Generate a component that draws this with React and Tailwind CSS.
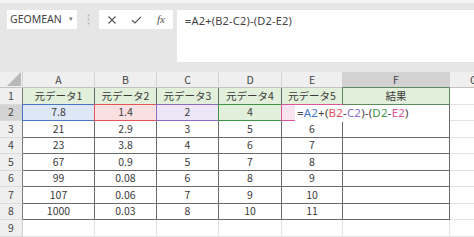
import React from "react";

const CELL_FONT = { fontFamily: '"Noto Sans CJK JP", "Noto Sans", sans-serif' };
const UI_FONT = { fontFamily: '"Noto Sans", "Open Sans", sans-serif' };

const rowsData = [
  ["21", "2.9", "3", "5", "6"],
  ["23", "3.8", "4", "6", "7"],
  ["67", "0.9", "5", "7", "8"],
  ["99", "0.08", "6", "8", "9"],
  ["107", "0.06", "7", "9", "10"],
  ["1000", "0.03", "8", "10", "11"],
];

const headers = ["元データ1", "元データ2", "元データ3", "元データ4", "元データ5", "結果"];

function HeaderCell({ children, dark }) {
  return (
    <div
      className={
        "flex items-center justify-center border-r border-b border-r-[#d4d4d4] border-b-[#c4c4c4] text-[10.5px] text-[#444] " +
        (dark ? "bg-[#d2d2d2]" : "bg-[#efefef]")
      }
    >
      {children}
    </div>
  );
}

function RowHead({ n, dark, inTable }) {
  return (
    <div
      className={
        "flex items-center justify-center border-r border-b border-b-[#dadada] text-[10.5px] text-[#444] " +
        (inTable ? "border-r-[#7a7a7a] " : "border-r-[#cfcfcf] ") +
        (dark ? "bg-[#d4d4d4]" : "bg-[#efefef]")
      }
    >
      {n}
    </div>
  );
}

function Cell({ children, bg = "bg-white", hl }) {
  return (
    <div
      className={
        "relative flex items-center justify-center border-r border-b border-[#6a6a6a] text-[10.5px] text-[#3a3a3a] " +
        bg
      }
    >
      {children}
      {hl && <div className={"absolute -inset-px border pointer-events-none " + hl} />}
    </div>
  );
}

function Blank() {
  return <div className="border-r border-b border-[#e2e2e2] bg-white" />;
}

export default function App() {
  return (
    <div className="w-[474px] h-[237px] overflow-hidden bg-white" style={CELL_FONT}>
      {/* toolbar */}
      <div className="h-[72px] bg-[#e6e6e6] flex flex-col">
        <div className="h-[3px] bg-[#f4f4f4]" />
        <div className="flex items-start pt-[7px] pl-[7px]">
          <div
            className="w-[70px] h-[19px] bg-white flex items-center justify-between pl-[3px] pr-[4px] text-[10.5px] text-[#444]"
            style={UI_FONT}
          >
            <span>GEOMEAN</span>
            <span className="text-[7px] text-[#777]">▾</span>
          </div>
          <div className="w-[22px] h-[19px] flex items-center justify-center">
            <svg width="3" height="11" viewBox="0 0 3 11">
              <circle cx="1.5" cy="1.5" r="0.9" fill="#b0b0b0" />
              <circle cx="1.5" cy="5.5" r="0.9" fill="#b0b0b0" />
              <circle cx="1.5" cy="9.5" r="0.9" fill="#b0b0b0" />
            </svg>
          </div>
          <div className="w-[74px] h-[19px] bg-white flex items-center">
            <div className="w-[25px] flex justify-center">
              <svg width="10" height="10" viewBox="0 0 10 10">
                <path d="M1.5 1.5 L8.5 8.5 M8.5 1.5 L1.5 8.5" stroke="#555" strokeWidth="1.1" />
              </svg>
            </div>
            <div className="w-[25px] flex justify-center">
              <svg width="11" height="10" viewBox="0 0 11 10">
                <path d="M1 5.2 L4 8 L10 1.8" stroke="#555" strokeWidth="1.2" fill="none" />
              </svg>
            </div>
            <div
              className="w-[24px] flex justify-center italic text-[11px] text-[#555]"
              style={{ fontFamily: '"Liberation Serif", serif' }}
            >
              fx
            </div>
          </div>
          <div
            className="ml-[4px] flex-1 h-[52px] bg-white pl-[8px] pt-[3px] text-[11px] tracking-[0.2px] text-[#444]"
            style={UI_FONT}
          >
            =A2+(B2-C2)-(D2-E2)
          </div>
        </div>
      </div>

      {/* grid */}
      <div className="relative">
        <div className="grid grid-cols-[23px_72px_62px_62px_63px_61px_107px_1fr] grid-rows-[16px_repeat(9,16.5px)]">
          {/* header row */}
          <div className="relative bg-[#efefef] border-r border-b border-r-[#d4d4d4] border-b-[#c4c4c4]">
            <svg className="absolute right-[1px] bottom-[1px]" width="14" height="14" viewBox="0 0 14 14">
              <polygon points="14,0 14,14 0,14" fill="#b9b9b9" />
            </svg>
          </div>
          <HeaderCell>A</HeaderCell>
          <HeaderCell>B</HeaderCell>
          <HeaderCell>C</HeaderCell>
          <HeaderCell>D</HeaderCell>
          <HeaderCell>E</HeaderCell>
          <HeaderCell dark>F</HeaderCell>
          <div className="bg-[#efefef] border-b border-b-[#c4c4c4] flex items-center pl-[20px] text-[10.5px] text-[#444]">
            G
          </div>

          {/* row 1 */}
          <RowHead n="1" inTable />
          {headers.map((h, i) => (
            <Cell key={h} bg="bg-[#e2efda]" hl={i === 5 ? "border-[#5e8a5e]" : undefined}>
              {h}
            </Cell>
          ))}
          <Blank />

          {/* row 2 */}
          <RowHead n="2" dark inTable />
          <Cell bg="bg-[#dde7f6]" hl="border-[#4a74c4]">7.8</Cell>
          <Cell bg="bg-[#fae0e0]" hl="border-[#e0555a]">1.4</Cell>
          <Cell bg="bg-[#ece6f6]" hl="border-[#8a6cc6]">2</Cell>
          <Cell bg="bg-[#e2efda]" hl="border-[#3e9446]">4</Cell>
          <Cell bg="bg-[#f9e3ee]" hl="border-[#d8569a]"></Cell>
          <Cell></Cell>
          <Blank />

          {rowsData.map((r, i) => (
            <React.Fragment key={i}>
              <RowHead n={String(i + 3)} inTable />
              {r.map((v, j) => (
                <Cell key={j}>{v}</Cell>
              ))}
              <Cell></Cell>
              <Blank />
            </React.Fragment>
          ))}

          {/* row 9 */}
          <RowHead n="9" />
          <Blank />
          <Blank />
          <Blank />
          <Blank />
          <Blank />
          <Blank />
          <Blank />
        </div>

        {/* in-cell edit box */}
        <div
          className="absolute left-[295px] top-[32.5px] w-[154px] h-[17px] bg-white flex items-center pl-[2px] text-[11.5px] tracking-[0.2px] text-[#444]"
          style={UI_FONT}
        >
          <span>=</span>
          <span className="text-[#4a74c4]">A2</span>
          <span>+(</span>
          <span className="text-[#e0555a]">B2</span>
          <span>-</span>
          <span className="text-[#8a6cc6]">C2</span>
          <span>)-(</span>
          <span className="text-[#3e9446]">D2</span>
          <span>-</span>
          <span className="text-[#d8569a]">E2</span>
          <span>)</span>
        </div>
      </div>
    </div>
  );
}
